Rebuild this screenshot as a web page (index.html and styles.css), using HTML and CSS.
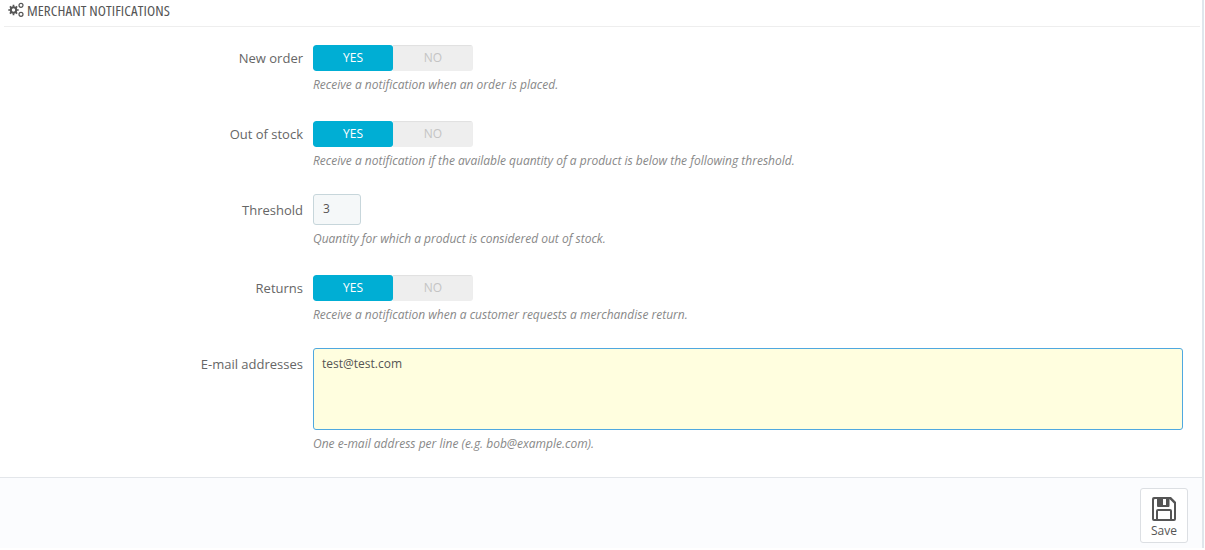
FILE: index.html
```html
<!DOCTYPE html>
<html lang="en">
<head>
<meta charset="utf-8">
<title>Merchant notifications</title>
<link rel="stylesheet" href="styles.css">
</head>
<body>
<div class="panel">
  <h3 class="panel-heading">
    <svg class="cogs" width="16" height="16" viewBox="0 0 16 16"><g fill="none" stroke="#555"><circle cx="5.500" cy="8" r="2.700" stroke-width="2"/><path d="M5.500 2.800v2M5.500 11.200v2M.3 8h2M8.700 8h2M1.900 4.400l1.400 1.400M7.700 10.200l1.400 1.400M1.900 11.600l1.400-1.400M7.700 5.800l1.400-1.400" stroke-width="1.700"/><circle cx="13" cy="3.300" r="2" stroke-width="1.200"/><circle cx="13" cy="12.300" r="2" stroke-width="1.200"/></g></svg>
    <span class="title">MERCHANT NOTIFICATIONS</span>
  </h3>
  <form class="form">
    <div class="row row-first">
      <label class="label">New order</label>
      <div class="field">
        <div class="switch"><span class="on">YES</span><span class="off">NO</span></div>
        <p class="help">Receive a notification when an order is placed.</p>
      </div>
    </div>
    <div class="row">
      <label class="label">Out of stock</label>
      <div class="field">
        <div class="switch"><span class="on">YES</span><span class="off">NO</span></div>
        <p class="help">Receive a notification if the available quantity of a product is below the following threshold.</p>
      </div>
    </div>
    <div class="row row-first">
      <label class="label label-input">Threshold</label>
      <div class="field">
        <div class="input">3</div>
        <p class="help">Quantity for which a product is considered out of stock.</p>
      </div>
    </div>
    <div class="row">
      <label class="label">Returns</label>
      <div class="field">
        <div class="switch"><span class="on">YES</span><span class="off">NO</span></div>
        <p class="help">Receive a notification when a customer requests a merchandise return.</p>
      </div>
    </div>
    <div class="row">
      <label class="label label-input">E-mail addresses</label>
      <div class="field">
        <div class="textarea">test@test.com</div>
        <p class="help">One e-mail address per line (e.g. bob@example.com).</p>
      </div>
    </div>
  </form>
  <div class="footer">
    <button class="save" type="button">
      <svg width="24" height="24" viewBox="0 0 24 24"><path fill="#555" fill-rule="evenodd" d="M2 0h17l5 5v17a2 2 0 0 1-2 2H2a2 2 0 0 1-2-2V2a2 2 0 0 1 2-2ZM3 2a1 1 0 0 0-1 1v19h2v-8a2 2 0 0 1 2-2h12a2 2 0 0 1 2 2v8h2V6.500L17.500 2v7a1 1 0 0 1-1 1H6a1 1 0 0 1-1-1V2ZM6 14v8h12v-8ZM11 2v6h3V2Z"/></svg>
      <span class="save-text">Save</span>
    </button>
  </div>
</div>
</body>
</html>
```
FILE: styles.css
```css
* { box-sizing: border-box; }
html, body { margin: 0; padding: 0; background: #fff; }
body { width: 1205px; height: 550px; overflow: hidden; font-family: "Open Sans", sans-serif; font-size: 12px; color: #555; }
.panel { width: 1204px; height: 548px; padding-left: 4px; border-right: 2px solid #dfe6ec; display: flex; flex-direction: column; }
.panel-heading { margin: 0 2px 0 0; height: 27px; padding: 1px 0 0 4px; display: flex; align-items: flex-start; gap: 3px; border-bottom: 1px solid #eee; font-weight: 400; font-size: 15px; line-height: 18px; color: #555; }
.title { font-family: "Open Sans", sans-serif; font-stretch: 75%; letter-spacing: .08px; }
.cogs { margin-top: 1px; }
.form { flex: 1; padding-top: 18px; }
.row { display: flex; gap: 10px; margin-bottom: 25px; }
.row-first { margin-bottom: 28px; }
.label { width: 299px; text-align: right; font-size: 13px; line-height: 18px; padding-top: 4px; color: #666; }
.label-input { padding-top: 7px; }
.field { flex: 1; min-width: 0; }
.switch { width: 160px; height: 26px; display: flex; border-radius: 3px; overflow: hidden; font-size: 12px; font-weight: 500; line-height: 26px; text-align: center; }
.on { width: 80px; background: #00aed4; color: #fff; border-radius: 3px; }
.off { width: 80px; background: #eee; color: #c4c4c4; box-shadow: inset 0 1px 1px rgba(0,0,0,.06); }
.help { margin: 6px 0 0; font-size: 12px; line-height: 16px; font-style: italic; color: #888; }
.input { width: 48px; height: 31px; padding-left: 9px; background: #f5f8f9; border: 1px solid #c7d6db; border-radius: 3px; font-size: 12px; line-height: 27px; color: #555; }
.textarea { width: 870px; height: 82px; padding: 6px 8px; background: #fffedf; border: 1px solid #4fa8e0; border-radius: 3px; font-size: 12px; line-height: 17px; color: #555; }
.footer { height: 71px; margin-left: -4px; background: #fbfcfe; border-top: 1px solid #e3e6ea; padding: 10px 14px 0 0; display: flex; justify-content: flex-end; align-items: flex-start; }
.save { width: 48px; height: 55px; padding: 8px 0 0; background: #fff; border: 1px solid #dcdfe3; border-radius: 3px; display: flex; flex-direction: column; align-items: center; gap: 2px; font-family: "Open Sans", sans-serif; font-size: 12px; line-height: 16px; color: #555; }
```
